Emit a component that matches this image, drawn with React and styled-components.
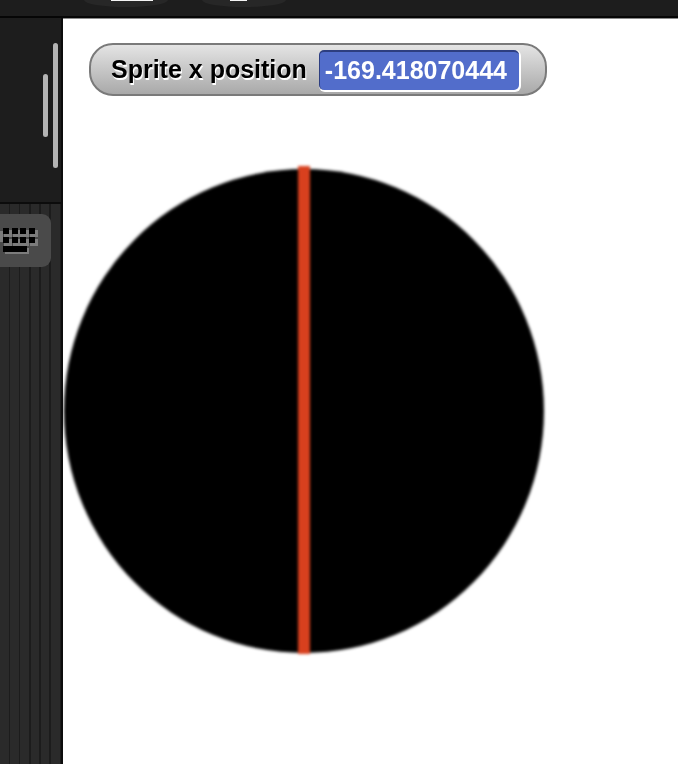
import React from "react";
import styled, { createGlobalStyle } from "styled-components";

const Global = createGlobalStyle`
  html, body { margin: 0; padding: 0; background: #fff; }
  body { font-family: "Liberation Sans", Arial, sans-serif; overflow: hidden; }
`;

const Page = styled.div`
  width: 678px;
  height: 764px;
  display: flex;
  flex-direction: column;
  overflow: hidden;
`;

const TopBar = styled.div`
  height: 16px;
  flex: none;
  background: #1d1d1d;
  border-bottom: 2px solid #060606;
  display: flex;
  padding-left: 84px;
  gap: 34px;
`;

const TopTab = styled.div`
  width: ${props => props.w}px;
  height: 7px;
  box-sizing: border-box;
  padding-left: ${props => props.offset}px;
  background: #272727;
  border-radius: 0 0 42px 42px / 0 0 7px 7px;
`;

const TabMark = styled.div`
  width: ${props => props.w}px;
  height: 1px;
  background: #f4f4f4;
`;

const Body = styled.div`
  flex: 1;
  display: flex;
  min-height: 0;
`;

const Side = styled.div`
  width: 61px;
  flex: none;
  border-right: 2px solid #0d0d0d;
  display: flex;
  flex-direction: column;
`;

const SideTop = styled.div`
  height: 186px;
  box-sizing: border-box;
  flex: none;
  background: #1d1d1d;
  border-bottom: 2px solid #0c0c0c;
  display: flex;
  justify-content: flex-end;
  gap: 5px;
  padding: 25px 3px 0 0;
`;

const Scroll = styled.div`
  width: 5px;
  height: ${props => props.h}px;
  margin-top: ${props => props.top}px;
  background: #b4b4b4;
  border-radius: 3px;
`;

const SideBottom = styled.div`
  flex: 1;
  padding-top: 10px;
  background: repeating-linear-gradient(90deg, #2a2a2a 0 8.6px, #1c1c1c 8.6px 10.2px);
`;

const KeyButton = styled.div`
  width: 51px;
  height: 53px;
  background: #4a4a4a;
  border-radius: 0 9px 9px 0;
  display: flex;
  align-items: center;
`;

const Stage = styled.div`
  flex: 1;
  background: #fff;
  border-top: 1px solid #8a8a8a;
  padding: 24px 0 0 26px;
  display: flex;
  flex-direction: column;
  min-width: 0;
`;

const Monitor = styled.div`
  width: 458px;
  height: 53px;
  box-sizing: border-box;
  border: 2px solid #7a7a7a;
  border-radius: 24px;
  background: linear-gradient(#e4e4e4, #a9a9a9);
  display: flex;
  align-items: center;
  padding-left: 20px;
  filter: blur(0.3px);
`;

const MonitorLabel = styled.span`
  font-size: 25px;
  font-weight: bold;
  color: #000;
  text-shadow: 1px 2px 0 #fff;
  white-space: nowrap;
`;

const Readout = styled.div`
  margin-left: 12px;
  width: 200px;
  height: 40px;
  box-sizing: border-box;
  background: #526dcb;
  border-radius: 5px;
  border-top: 2px solid #2d3e80;
  border-left: 1px solid #2d3e80;
  box-shadow: 1px 1px 0 1px #fff;
  color: #fff;
  font-size: 25px;
  font-weight: bold;
  line-height: 36px;
  padding-left: 5px;
  white-space: nowrap;
`;

const Ball = styled.div`
  position: relative;
  width: 480px;
  height: 484px;
  margin: 73px 0 0 -25px;
  border-radius: 50%;
  background: #000;
  filter: blur(1.5px);
  flex: none;
`;

const Needle = styled.div`
  position: absolute;
  left: 234px;
  top: -3px;
  width: 12px;
  height: 488px;
  background: #d8401e;
`;

const KEY_X = [3, 12, 20, 29];
const KEY_Y = [3, 12];

const KeyboardIcon = () => (
  <svg width="40" height="31" viewBox="0 0 40 31" fill="none">
    <rect x="0" y="6" width="3" height="11" fill="#7c7c7c" />
    {KEY_X.map(x =>
      KEY_Y.map(y => (
        <rect key={`s${x}${y}`} x={x + 1} y={y + 2} width="8" height="7" fill="#7c7c7c" />
      ))
    )}
    <rect x="5" y="23" width="24" height="6" fill="#7c7c7c" />
    {KEY_X.map(x =>
      KEY_Y.map(y => <rect key={`k${x}${y}`} x={x} y={y} width="6" height="6" fill="#000" />)
    )}
    <rect x="3" y="21" width="24" height="6" fill="#000" />
  </svg>
);

export default function App() {
  return (
    <Page>
      <Global />
      <TopBar>
        <TopTab w={84} offset={27}>
          <TabMark w={42} />
        </TopTab>
        <TopTab w={84} offset={28}>
          <TabMark w={17} />
        </TopTab>
      </TopBar>
      <Body>
        <Side>
          <SideTop>
            <Scroll h={63} top={31} />
            <Scroll h={125} top={0} />
          </SideTop>
          <SideBottom>
            <KeyButton>
              <KeyboardIcon />
            </KeyButton>
          </SideBottom>
        </Side>
        <Stage>
          <Monitor>
            <MonitorLabel>Sprite x position</MonitorLabel>
            <Readout>-169.418070444</Readout>
          </Monitor>
          <Ball>
            <Needle />
          </Ball>
        </Stage>
      </Body>
    </Page>
  );
}
